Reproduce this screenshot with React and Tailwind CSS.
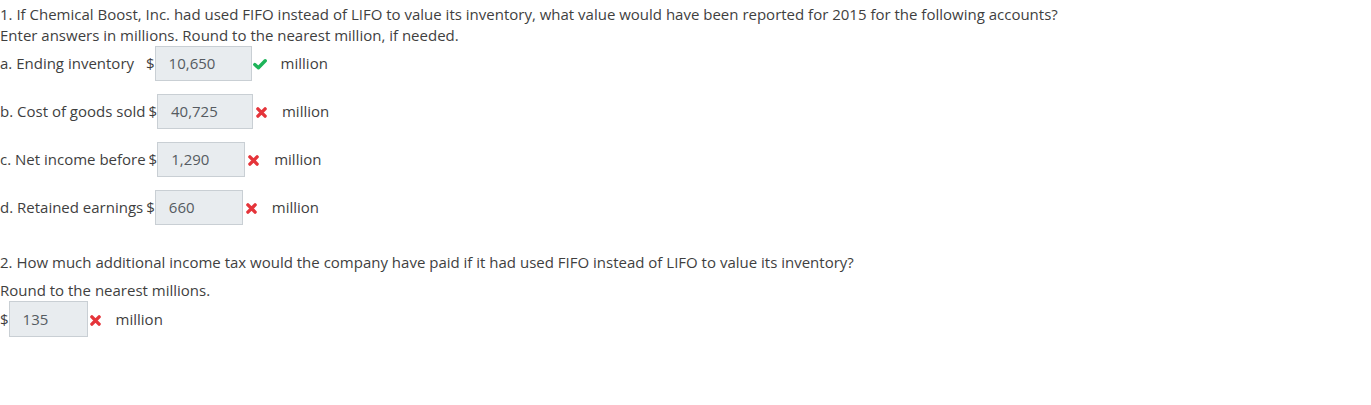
import React from 'react'

const Check = () => (
  <svg width="14" height="11" viewBox="0 0 14 11" aria-hidden="true">
    <path d="M1.8 5.6 L5.4 8.8 L12.2 1.8" fill="none" stroke="#1db459" strokeWidth="3.4" strokeLinecap="round" strokeLinejoin="round" />
  </svg>
)

const Cross = () => (
  <svg width="11" height="11" viewBox="0 0 11 11" aria-hidden="true">
    <path d="M1.9 1.9 L9.1 9.1 M9.1 1.9 L1.9 9.1" fill="none" stroke="#e5343a" strokeWidth="3.4" strokeLinecap="round" />
  </svg>
)

const Answer = ({ value, width, height = 'h-[35px]' }) => (
  <div
    className={`${height} ${width} shrink-0 flex items-center pl-[13px] bg-[#e8ecef] border border-[#c9cfd4] text-[#555b61]`}
  >
    {value}
  </div>
)

const rows = [
  { label: 'a. Ending inventory', gap: 'ml-[12px]', value: '10,650', width: 'w-[97px]', ok: true },
  { label: 'b. Cost of goods sold', gap: 'ml-[3px]', value: '40,725', width: 'w-[96px]' },
  { label: 'c. Net income before', gap: 'ml-[3px]', value: '1,290', width: 'w-[88px]' },
  { label: 'd. Retained earnings', gap: 'ml-[3px]', value: '660', width: 'w-[88px]' },
]

export default function App() {
  return (
    <div className="w-[1371px] h-[405px] bg-white text-[15px] leading-[21px] text-[#3f3f3f] font-['Open_Sans',sans-serif] pt-[4px]">
      <p>
        1. If Chemical Boost, Inc. had used FIFO instead of LIFO to value its inventory, what value would have been
        reported for 2015 for the following accounts?
      </p>
      <p>Enter answers in millions. Round to the nearest million, if needed.</p>

      <div className="flex flex-col gap-[13px]">
        {rows.map((r) => (
          <div key={r.label} className="flex items-center h-[35px]">
            <span>{r.label}</span>
            <span className={r.gap}>$</span>
            <Answer value={r.value} width={r.width} />
            <span className={`flex items-center mt-[2px] ${r.ok ? 'ml-[1px] w-[14px]' : 'ml-[3px] w-[11px]'}`}>
              {r.ok ? <Check /> : <Cross />}
            </span>
            <span className={r.ok ? 'ml-[14px]' : 'ml-[15px]'}>million</span>
          </div>
        ))}
      </div>

      <p className="mt-[27px]">
        2. How much additional income tax would the company have paid if it had used FIFO instead of LIFO to value
        its inventory?
      </p>
      <p className="mt-[7px]">Round to the nearest millions.</p>
      <div className="flex items-center h-[36px]">
        <span>$</span>
        <Answer value="135" width="w-[79px]" height="h-[36px]" />
        <span className="flex items-center mt-[2px] ml-[2px] w-[11px]">
          <Cross />
        </span>
        <span className="ml-[15px]">million</span>
      </div>
    </div>
  )
}
